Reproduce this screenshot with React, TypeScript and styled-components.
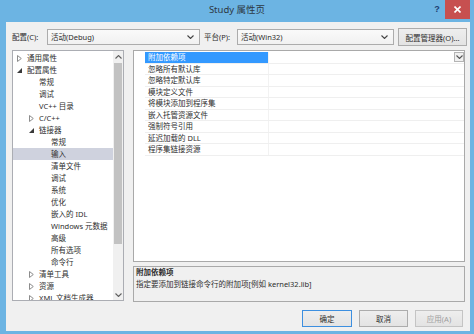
import React from "react";
import styled, { createGlobalStyle } from "styled-components";

const Global = createGlobalStyle`
  html, body { margin: 0; padding: 0; width: 474px; height: 334px; overflow: hidden; }
  body { font-family: "Noto Sans", "Noto Sans CJK SC", sans-serif; font-size: 7.5px; color: #2e2e2e; }
  * { box-sizing: border-box; }
`;

const Window = styled.div`
  width: 474px;
  height: 334px;
  display: flex;
  flex-direction: column;
  background: #6cb4e3;
`;

const TitleBar = styled.div`
  height: 22px;
  flex: none;
  display: grid;
  grid-template-columns: 1fr auto 1fr;
  align-items: start;
`;

const Title = styled.div`
  grid-column: 2;
  line-height: 20px;
  font-size: 9.5px;
  color: #2c3844;
  white-space: nowrap;
`;

const Controls = styled.div`
  grid-column: 3;
  justify-self: end;
  display: flex;
  padding-right: 4px;
`;

const HelpButton = styled.div`
  width: 16px;
  height: 19px;
  line-height: 19px;
  text-align: center;
  font-family: "Liberation Sans", sans-serif;
  font-weight: bold;
  font-size: 9px;
  color: #1d3d72;
`;

const CloseButton = styled.div`
  width: 25px;
  height: 19px;
  background: #c75050;
  display: flex;
  align-items: center;
  justify-content: center;
`;

const Body = styled.div`
  flex: 1;
  margin: 0 4px 3px 6px;
  background: #f0f0f0;
  display: flex;
  flex-direction: column;
  padding: 6px 3px 4px 6px;
`;

const TopRow = styled.div`
  height: 18px;
  display: flex;
  align-items: center;
`;

const FieldLabel = styled.div<{ $w: number; $ml?: number }>`
  width: ${(p) => p.$w}px;
  margin-left: ${(p) => p.$ml ?? 0}px;
  white-space: nowrap;
  line-height: 16px;
`;

const Select = styled.div<{ $w: number }>`
  width: ${(p) => p.$w}px;
  height: 16px;
  border: 1px solid #acacac;
  background: linear-gradient(#fafafa, #f1f1f1);
  display: flex;
  align-items: center;
  justify-content: space-between;
  padding: 0 5px 0 3px;
  line-height: 14px;
  white-space: nowrap;
`;

const Button = styled.div<{ $w: number; $focus?: boolean; $disabled?: boolean; $h?: number }>`
  width: ${(p) => p.$w}px;
  height: ${(p) => p.$h ?? 17}px;
  margin-left: ${(p) => (p.$h ? 4 : 0)}px;
  border: 1px solid ${(p) => (p.$focus ? "#3c8fe0" : p.$disabled ? "#c4c4c4" : "#acacac")};
  background: linear-gradient(#eeeeee, #e3e3e3);
  color: ${(p) => (p.$disabled ? "#9d9d9d" : "#2e2e2e")};
  display: flex;
  align-items: center;
  justify-content: center;
  white-space: nowrap;
`;

const Main = styled.div`
  margin-top: 4px;
  height: 252px;
  display: flex;
  gap: 9px;
`;

const Tree = styled.div`
  width: 112px;
  height: 251px;
  border: 1px solid #abadb3;
  background: #fff;
  display: flex;
  overflow: hidden;
`;

const TreeList = styled.div`
  flex: 1;
  padding-top: 1px;
  overflow: hidden;
`;

const TreeRow = styled.div<{ $lvl: number; $sel?: boolean }>`
  height: 12px;
  line-height: 12px;
  display: flex;
  align-items: center;
  padding-left: ${(p) => 4 + p.$lvl * 12}px;
  background: ${(p) => (p.$sel ? "#cfd2de" : "transparent")};
  white-space: nowrap;
`;

const Expander = styled.span`
  width: 10px;
  flex: none;
  display: flex;
  align-items: center;
`;

const ScrollBar = styled.div`
  width: 10px;
  flex: none;
  background: #f0f0f0;
  display: flex;
  flex-direction: column;
  align-items: center;
`;

const ScrollArrow = styled.div`
  height: 11px;
  width: 10px;
  display: flex;
  align-items: center;
  justify-content: center;
  flex: none;
`;

const Thumb = styled.div`
  width: 8px;
  height: 181px;
  margin-top: 1px;
  background: #c2c2c2;
  flex: none;
`;

const Spacer = styled.div`
  flex: 1;
`;

const RightCol = styled.div`
  width: 332px;
  display: flex;
  flex-direction: column;
  gap: 4px;
`;

const Grid = styled.div`
  height: 212px;
  border: 1px solid #a9a9a9;
  background: #fff;
  padding: 1px 0 0 11px;
`;

const GridRow = styled.div`
  height: 11.5px;
  display: grid;
  grid-template-columns: 123px 1fr;
  border-bottom: 1px solid #efefef;
`;

const NameCell = styled.div<{ $sel?: boolean }>`
  padding-left: 3px;
  line-height: 10.5px;
  white-space: nowrap;
  background: ${(p) => (p.$sel ? "#3399ff" : "transparent")};
  color: ${(p) => (p.$sel ? "#fff" : "#2e2e2e")};
`;

const ValueCell = styled.div`
  border-left: 1px solid #f2f2f2;
  display: flex;
  justify-content: flex-end;
  align-items: flex-start;
`;

const DropButton = styled.div`
  width: 10px;
  height: 10px;
  border: 1px solid #b4b4b4;
  background: #f0f0f0;
  display: flex;
  align-items: center;
  justify-content: center;
`;

const Desc = styled.div`
  height: 36px;
  border: 1px solid #a9a9a9;
  background: #f0f0f0;
  padding: 0 2px;
`;

const DescTitle = styled.div`
  font-weight: bold;
  line-height: 11px;
`;

const DescText = styled.div`
  margin-top: 1px;
  line-height: 11px;
  white-space: nowrap;
`;

const ButtonRow = styled.div`
  margin-top: 8px;
  height: 17px;
  display: flex;
  justify-content: flex-end;
  gap: 7px;
  margin-right: 4px;
`;

const Chevron = ({ up, color = "#444" }: { up?: boolean; color?: string }) => (
  <svg width="7" height="4" viewBox="0 0 7 4">
    <path d={up ? "M0.5 3.5 L3.5 0.5 L6.5 3.5" : "M0.5 0.5 L3.5 3.5 L6.5 0.5"} fill="none" stroke={color} strokeWidth="1.1" />
  </svg>
);

const Collapsed = () => (
  <svg width="5" height="7" viewBox="0 0 5 7">
    <path d="M0.5 0.5 L4.3 3.5 L0.5 6.5 Z" fill="none" stroke="#8c8c8c" strokeWidth="1" />
  </svg>
);

const Expanded = () => (
  <svg width="5" height="5" viewBox="0 0 5 5">
    <path d="M5 0 L5 5 L0 5 Z" fill="#3a3a3a" />
  </svg>
);

type Node = { t: string; lvl: number; a?: "c" | "e"; sel?: boolean };

const tree: Node[] = [
  { t: "通用属性", lvl: 0, a: "c" },
  { t: "配置属性", lvl: 0, a: "e" },
  { t: "常规", lvl: 1 },
  { t: "调试", lvl: 1 },
  { t: "VC++ 目录", lvl: 1 },
  { t: "C/C++", lvl: 1, a: "c" },
  { t: "链接器", lvl: 1, a: "e" },
  { t: "常规", lvl: 2 },
  { t: "输入", lvl: 2, sel: true },
  { t: "清单文件", lvl: 2 },
  { t: "调试", lvl: 2 },
  { t: "系统", lvl: 2 },
  { t: "优化", lvl: 2 },
  { t: "嵌入的 IDL", lvl: 2 },
  { t: "Windows 元数据", lvl: 2 },
  { t: "高级", lvl: 2 },
  { t: "所有选项", lvl: 2 },
  { t: "命令行", lvl: 2 },
  { t: "清单工具", lvl: 1, a: "c" },
  { t: "资源", lvl: 1, a: "c" },
  { t: "XML 文档生成器", lvl: 1, a: "c" },
];

const props = [
  "附加依赖项",
  "忽略所有默认库",
  "忽略特定默认库",
  "模块定义文件",
  "将模块添加到程序集",
  "嵌入托管资源文件",
  "强制符号引用",
  "延迟加载的 DLL",
  "程序集链接资源",
];

export default function App() {
  return (
    <>
      <Global />
      <Window>
        <TitleBar>
          <Title>Study 属性页</Title>
          <Controls>
            <HelpButton>?</HelpButton>
            <CloseButton>
              <svg width="7" height="7" viewBox="0 0 7 7">
                <path d="M0.5 0.5 L6.5 6.5 M6.5 0.5 L0.5 6.5" stroke="#fff" strokeWidth="1.6" />
              </svg>
            </CloseButton>
          </Controls>
        </TitleBar>
        <Body>
          <TopRow>
            <FieldLabel $w={35}>配置(C):</FieldLabel>
            <Select $w={153}>
              <span>活动(Debug)</span>
              <Chevron />
            </Select>
            <FieldLabel $w={33} $ml={4}>平台(P):</FieldLabel>
            <Select $w={157}>
              <span>活动(Win32)</span>
              <Chevron />
            </Select>
            <Button $w={69} $h={18}>配置管理器(O)...</Button>
          </TopRow>
          <Main>
            <Tree>
              <TreeList>
                {tree.map((n, i) => (
                  <TreeRow key={i} $lvl={n.lvl} $sel={n.sel}>
                    <Expander>{n.a === "c" ? <Collapsed /> : n.a === "e" ? <Expanded /> : null}</Expander>
                    {n.t}
                  </TreeRow>
                ))}
              </TreeList>
              <ScrollBar>
                <ScrollArrow>
                  <Chevron up color="#606060" />
                </ScrollArrow>
                <Thumb />
                <Spacer />
                <ScrollArrow>
                  <Chevron color="#606060" />
                </ScrollArrow>
              </ScrollBar>
            </Tree>
            <RightCol>
              <Grid>
                {props.map((p, i) => (
                  <GridRow key={i}>
                    <NameCell $sel={i === 0}>{p}</NameCell>
                    <ValueCell>
                      {i === 0 && (
                        <DropButton>
                          <Chevron color="#555" />
                        </DropButton>
                      )}
                    </ValueCell>
                  </GridRow>
                ))}
              </Grid>
              <Desc>
                <DescTitle>附加依赖项</DescTitle>
                <DescText>指定要添加到链接命令行的附加项[例如 kernel32.lib]</DescText>
              </Desc>
            </RightCol>
          </Main>
          <ButtonRow>
            <Button $w={50} $focus>确定</Button>
            <Button $w={49}>取消</Button>
            <Button $w={48} $disabled>应用(A)</Button>
          </ButtonRow>
        </Body>
      </Window>
    </>
  );
}
